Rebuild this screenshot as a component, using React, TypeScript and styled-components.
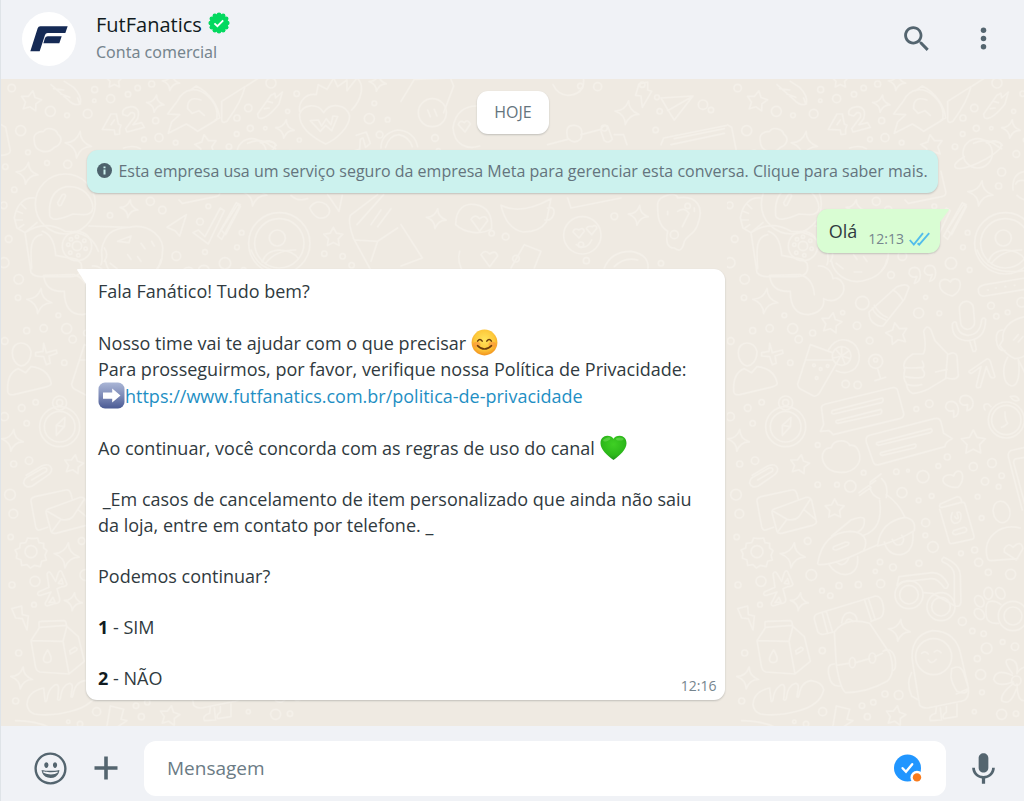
import React from "react";
import styled, { createGlobalStyle } from "styled-components";

const GlobalStyle = createGlobalStyle`
  *, *::before, *::after { box-sizing: border-box; }
  body { margin: 0; }
  body, button, input {
    font-family: "Open Sans", "Noto Sans", sans-serif;
  }
`;

const Page = styled.div`
  display: flex;
  flex-direction: column;
  min-height: 100vh;
  background: #f0f2f6;
  border-left: 1px solid #dfe4e8;
  color: #111b21;
`;

const Header = styled.header`
  display: flex;
  align-items: center;
  min-height: 79px;
  padding: 0 24px 2px 21px;
`;

const Contact = styled.div`
  flex: 1;
  margin-left: 20px;
`;

const Name = styled.h1`
  display: flex;
  align-items: center;
  gap: 6px;
  margin: 0;
  font-size: 20px;
  line-height: 26px;
  font-weight: 400;
`;

const Verified_ = styled.svg`
  flex: none;
  margin-bottom: 4px;
`;

const Subtitle = styled.p`
  margin: 0;
  font-family: "Noto Sans", "Open Sans", sans-serif;
  font-size: 16px;
  line-height: 28px;
  color: #76858e;
`;

const Actions = styled.div`
  display: flex;
  gap: 34px;
`;

const IconButton = styled.button`
  display: flex;
  align-items: center;
  justify-content: center;
  flex: none;
  padding: 0;
  border: 0;
  background: none;
  color: #54656f;
  cursor: pointer;
`;

const Chat = styled.main`
  position: relative;
  flex: 1;
  background: #efeae2;
`;

const Wallpaper = styled.svg`
  position: absolute;
  inset: 0;
  width: 100%;
  height: 100%;
`;

const Thread = styled.div`
  position: relative;
  display: flex;
  flex-direction: column;
  gap: 16px;
  padding: 12px 84px 26px 85px;
`;

const DayPill = styled.div`
  align-self: center;
  padding: 0 17px;
  border-radius: 11px;
  background: #fff;
  box-shadow: 0 1px 2px rgba(11, 20, 26, 0.2);
  font-size: 16px;
  line-height: 43px;
  color: #64747d;
`;

const Notice = styled.button`
  display: flex;
  align-items: center;
  justify-content: center;
  gap: 6px;
  min-height: 43px;
  margin: 0 2px 0 1px;
  padding: 0 0 2px;
  border: 0;
  border-radius: 11px;
  background: #ccf2ee;
  box-shadow: 0 1px 2px rgba(11, 20, 26, 0.2);
  font-size: 16px;
  line-height: 24px;
  color: #64747d;
  cursor: pointer;
`;

const Bubble = styled.article<{ $mine?: boolean }>`
  position: relative;
  align-self: ${(p) => (p.$mine ? "flex-end" : "flex-start")};
  width: ${(p) => (p.$mine ? "auto" : "calc(75% - 2px)")};
  padding: ${(p) => (p.$mine ? "9px 10px 9px 12px" : "9px 8px 9px 12px")};
  border-radius: ${(p) => (p.$mine ? "11px 0 11px 11px" : "0 11px 11px 11px")};
  background: ${(p) => (p.$mine ? "#d9fdd3" : "#fff")};
  box-shadow: 0 1px 2px rgba(11, 20, 26, 0.2);
  font-size: 18px;
  line-height: 26px;
  color: #303a40;
  b { color: #111b21; }
`;

const Tail = styled.svg<{ $mine?: boolean }>`
  position: absolute;
  top: 0;
  ${(p) => (p.$mine ? "right: -9px;" : "left: -9px;")}
`;

const Inline = styled.div`
  display: flex;
  gap: 11px;
`;

const Paragraph = styled.p`
  margin: 0 0 25px;
  white-space: pre-wrap;
  &:last-child { margin-bottom: 0; }
`;

const LastLine = styled.div`
  display: flex;
  justify-content: space-between;
`;

const Stamp = styled.span`
  display: flex;
  align-items: center;
  gap: 5px;
  align-self: flex-end;
  margin-bottom: -7px;
  font-size: 14px;
  line-height: 24px;
  color: #76858e;
`;

const Link = styled.a`
  color: #1f8fc4;
  text-decoration: none;
`;

const EmojiSvg = styled.svg`
  display: inline-block;
  vertical-align: -6px;
`;

const Footer = styled.footer`
  display: flex;
  align-items: center;
  min-height: 75px;
  padding: 14px 24px 5px 32px;
`;

const Composer = styled.div`
  display: flex;
  flex: 1;
  align-items: center;
  height: 55px;
  margin: 0 21px 0 23px;
  padding: 0 24px 0 23px;
  border-radius: 12px;
  background: #fff;
`;

const Field = styled.input`
  flex: 1;
  min-width: 0;
  height: 100%;
  padding: 0;
  border: 0;
  outline: 0;
  background: none;
  font-size: 19px;
  color: #111b21;
  &::placeholder { color: #6b7b85; opacity: 1; }
`;

const AttachWrap = styled.div`
  display: flex;
  margin-left: 23px;
`;

/* ---------- wallpaper ---------- */

const Dots = ({ list }: { list: number[][] }) => (
  <>
    {list.map(([x, y, r], i) => (
      <circle key={i} cx={x} cy={y} r={r} />
    ))}
  </>
);

const Star = ({ x, y, r, a = 0 }: { x: number; y: number; r: number; a?: number }) => {
  const pts = Array.from({ length: 10 }, (_, i) => {
    const t = ((i * 36 - 90 + a) * Math.PI) / 180;
    const q = i % 2 ? r * 0.52 : r;
    return `${(x + q * Math.cos(t)).toFixed(1)},${(y + q * Math.sin(t)).toFixed(1)}`;
  });
  return <polygon points={pts.join(" ")} />;
};

const Sparkle = ({ x, y, r }: { x: number; y: number; r: number }) => {
  const k = r * 0.2;
  return (
    <path
      transform={`rotate(8 ${x} ${y})`}
      d={`M${x} ${y - r}Q${x + k / 2} ${y - k} ${x + r} ${y}Q${x + k} ${y + k / 2} ${x} ${y + r}Q${x - k / 2} ${y + k} ${x - r} ${y}Q${x - k} ${y - k / 2} ${x} ${y - r}z`}
    />
  );
};

const Doodles = () => (
  <g fill="none" stroke="#f4f0e9" strokeWidth="5" strokeLinecap="round" strokeLinejoin="round">
    {/* lower part: envelopes, scooter, luggage, carton, bread */}
    <g transform="translate(-2 361) scale(.3333)">
      <Dots list={[[44,72,9],[90,62,11],[278,15,7],[278,134,8],[336,134,7],[376,139,17],[33,164,16],[43,221,13],[416,98,7],[514,95,8],[549,92,4],[594,110,18],[531,158,15],[581,181,7],[620,168,7],[640,78,7],[667,51,9],[745,80,12],[801,69,13],[780,124,11],[830,107,8],[821,140,7],[758,170,7],[770,234,7],[602,248,12],[601,286,7],[624,321,16],[35,291,8],[248,303,10],[259,405,16],[108,424,15],[39,435,9],[105,494,7],[291,452,7],[316,467,8],[342,437,9],[400,434,9],[465,366,8],[451,394,6],[504,382,10],[467,431,12],[582,370,9],[708,340,7],[749,330,9],[761,367,12],[790,397,9],[857,403,15],[712,544,12],[742,573,8],[776,581,8],[785,625,16],[833,606,7],[870,620,11],[757,656,9],[767,704,15],[59,639,9],[292,632,9],[50,783,9],[293,815,12],[411,797,8],[445,787,8],[480,762,9],[521,765,13],[427,830,9],[771,757,7],[748,815,6],[830,823,15],[873,821,8],[208,845,5],[243,852,8]]} />
      <Star x={224} y={74} r={30} a={10} />
      <Star x={329} y={207} r={30} />
      <Star x={745} y={8} r={38} />
      <Star x={512} y={828} r={31} a={10} />
      <Sparkle x={203} y={346} r={38} />
      <Sparkle x={223} y={485} r={27} />
      <Sparkle x={523} y={571} r={33} />
      <Sparkle x={68} y={714} r={33} />
      <path d="M82 106l46-28q24-10 30 8 0 12-12 20l-46 32q-20 8-26-8 0-14 12-20l46-26q16-2 10 10l-44 26" />
      <path d="M146 262l-24 8q-8 2-12-10l-14-76q-2-10 12-14l92-20q12-2 16 12l4 16M150 206q-12 4-8 16l14 52q4 8 14 6l92-24q14-4 12-12l-14-62q-4-12-16-10zM142 212l44 26q22 6 36-8l34-52M158 276l28-38M272 238l-36-30" />
      <path d="M48 330l14-6 2-14 16-2 6-14 16 2 14-2 4 14 14 2 0 14 10 8-6 14 4 14-14 4-4 16-18-4-12 8-10-10-16 2-2-16-14-6 2-12z" /><circle cx="96" cy="335" r="18" />
      <path d="M144 402q6-14 14 2l12 20 8-26q8-12 12 2l14 32q-2 8-16 8l-14 6 8 30q2 14-12 14l-26 8q-10-4-2-14l14-28-30 10q-14 2-8-10l32-14zM178 430l10-14 4 16zM150 488l12-16 6 14z" />
      <path d="M278 370c10-60 40-94 98-96 40 2 56 24 40 58-40 20-90 40-130 42q-8 0-8-4zM320 288l58-48q36-14 40-2 2 28-20 38M312 374q20 30 50 30 40-4 36-54M334 366q22 20 38-12M326 320l36-14q16 0 6 10l-34 14q-14 0-8-10zM416 286q60-20 48-104M464 176q-34-14-28-50l32-24M402 158l50-36M404 166l34-24M470 116q22 20 14 56M484 164q36 24 56 68M414 334l44-20q10-70 82-82 34 6 28 40-48 30-110 46M478 306q10 40 50 38 40-8 36-66M502 298q8 24 28 14 12-16 0-26" />
      <path d="M644 208l28 96q2 10 12 6l56-12q10-2 6-14l-26-92q-4-8-14-4l-54 14q-12 2-6-10l50-22q14 0 14 18M682 218q-10 22 6 32 22 0 20-24-2-14-12-8l4 16q-8 4-10-4M686 272l32-10q12 4 4 14l-30 8q-14-2-6-12z" />
      <path d="M804 212c4-40 40-34 50-4 8 40-30 54-46 22zM786 350c-12-60 40-100 100-86M786 350q2 12 12 12l80-6M838 326q12-20 26-4 24-24 30 4l-20 34-36-24z" />
      <path d="M850 50l42 160M866 68l34 126M850 50q-2-18 14-20l36-8M866 68q0-12 10-12l24-4" />
      <path d="M654 122c0-16 20-22 32-14 6-20 26-20 27 2 0 14-8 26-14 32-20 2-42-6-45-20z" />
      <circle cx="552" cy="464" r="42" /><circle cx="552" cy="464" r="28" /><circle cx="648" cy="500" r="42" /><circle cx="648" cy="500" r="28" />
      <path d="M522 410l100-12q30 0 48 36-2 14-12 10-20-30-40-28l-86 10-16 10zM594 458l28 2 68 38q18 4 18-14l-2-78q-2-34-50-54-10 8-2 14 34 14 34 40v84" />
      <ellipse cx="763" cy="484" rx="13" ry="18" transform="rotate(-30 763 484)" /><ellipse cx="790" cy="460" rx="13" ry="18" /><ellipse cx="826" cy="460" rx="13" ry="18" transform="rotate(-30 826 460)" /><ellipse cx="763" cy="522" rx="13" ry="18" transform="rotate(-40 763 522)" />
      <circle cx="864" cy="528" r="44" /><circle cx="864" cy="528" r="27" /><path d="M828 494q-20-16-38-8-10 10-6 44 4 22 36 20" />
      <path d="M38 506l30-8 2 26 18 4-4 42-14-34-20-2z" />
      <path d="M268 538q-2-14 14-18l170-52q20 0 24 38 0 26-16 30l-22 8M268 538l10 36q6 12 22 8l26-6M292 520l16 60M304 514l18 60M418 478l22 66M430 474l20 62M350 548q4-32 26-30 20 4 20 26M362 546q6-16 22-2" />
      <path d="M334 674l-6-98c30-40 70-36 106-26l60 90q20 60-8 84-60 34-124 34-16-10-28-84zM334 676l36-6M392 668l42-12M450 650l22-10M328 672q-24 0-16 34 6 36 34 32M474 634q26-14 36 20 6 36-8 38" /><ellipse cx="382" cy="668" rx="9" ry="15" /><ellipse cx="442" cy="654" rx="10" ry="15" />
      <path d="M96 602l26-40 78-6 38 34 18 74-46 38-88-6q-12-4-14-24zM96 602l96 2 18 98M192 604l12-46M120 562v-14q0-4 6-4l70-2q6 2 6 14M146 630q-24 36-2 38 24-2 2-38zM212 632l16-10q10 2 4 10l-18 10z" />
      <path d="M84 794q2-40 50-50l4 36q0 10 6 0 2-30 22-44 16-8 12 20l-2 22q4 6 8-2 4-40 28-46 12 0 6 26l-2 14q4 4 6-4 6-40 36-44 34 4 38 28-10 46-80 64-60 16-110 8-20-8-22-28z" />
      <circle cx="626" cy="650" r="54" />
      <path d="M584 796l-20-122c-12-60 16-94 58-102 50 0 76 30 84 66l24 104q4 40-22 42l-100 20q-16 0-24-8zM590 640q10-10 20 2M628 636q10-10 20 2M610 660q10 16 24-2M560 698q-18 30 0 70l20 12M680 686q26-14 36 12l14 44q-4 26-34 12-16-24-18-44zM694 762l36-16M634 802l-2 18q-24 8-16 22l34-2-4-36M664 800l0 16q-14 10-8 20l40-6v-38" />
      <path d="M862 700q-34-44-6-42 26 6 20 42 20-30 40-10M862 706q-50-22-56 12 10 26 58 8M866 730q-40 30-36 52 26 18 44-34M876 732q2 60 26 48" /><circle cx="874" cy="722" r="14" />
      <path d="M334 798l40 10-8 30 18 4-30 20M334 798l-10 60M50 842q60 0 100 20" />
    </g>
    {/* middle part: clouds, drink, thumb, compass, speech boxes */}
    <g transform="translate(-2 171) scale(.3333)">
      <Dots list={[[15,38,15],[59,88,14],[57,143,8],[178,196,7],[83,242,9],[134,235,11],[203,236,15],[221,268,11],[263,249,9],[353,188,6],[396,227,11],[412,159,20],[434,272,10],[498,75,10],[532,18,13],[678,40,17],[734,60,7],[602,142,6],[581,189,15],[643,190,7],[798,167,10],[814,199,8],[848,187,7],[890,157,14],[452,334,21],[452,330,6],[362,402,11],[398,405,11],[196,338,8],[17,273,10],[110,457,8],[68,474,10],[83,520,8],[16,500,12],[574,477,7],[613,461,11]]} />
      <Star x={319} y={220} r={32} a={10} />
      <Star x={516} y={252} r={34} a={-12} />
      <Sparkle x={121} y={153} r={38} />
      <Sparkle x={40} y={571} r={33} />
      <path d="M134 76c4 40 30 50 62 48 0 50 20 70 54 70 30-4 50-20 46-48 40 20 74-20 56-48-8-14-22-16-28-12-4-30-30-40-44-38M134 76l90-2q40 10 44 60" />
      <path d="M320 34c4 30 30 48 44 54q30 14 66 0c30-10 50-30 56-60M388 66h22M334 40l20 16M416 20l10 14" />
      <path d="M432 186l84-76q30-12 36 2l-14 36-64 80q-14 2-24-6-18-10-18-36zM442 174q8 24 40 36M448 166q14 26 38 36M504 120q18 10 30 32" />
      <path d="M570 52q-18 0-18 18 6 16 24 10l-8 20q18-4 18-26 0-20-16-22zM616 46q-18 0-18 18 6 16 24 10l-8 20q18-4 18-26 0-20-16-22zM680 454q-18 0-18 18 6 16 24 10l-0 20q16-4 14-26-2-20-20-22zM722 436q-18 0-18 18 6 16 24 10l-2 18q20-4 18-26-4-18-22-20z" />
      <path d="M644 104c0-16 20-22 32-8 8-14 30-12 30 8 0 18-16 30-24 34-20-4-38-16-38-34z" />
      <path d="M900 84l-120 20q-20 4-20 16 0 20 20 18l120-20M788 120h2M812 114h2M840 110h2M868 106h2" />
      <path d="M756 0c20 50 60 74 144 62M800 40q30-40 90-40" />
      <rect x="705" y="154" width="42" height="84" rx="21" transform="rotate(-5 726 196)" /><path d="M682 222q-2 50 50 50 50-6 50-64-8-8-12 2-4 44-42 46-30-2-34-38-6-6-12 4zM734 272l10 32q8 2 10-6l-6-28" />
      <path d="M732 364l52-36q8-4 12 6l14 46q-6 8-14 0l-12-30-18 62q-12 4-12-4l14-58-28 20q-8 0-8-6z" />
      <path d="M538 356q-8-24 26-44h30q12-14 2-68 10-24 22-4l12 32 38 40-6 74-50 30q-30 14-50 14-16-8-18-30-12-14-4-44zM538 352q16 4 54 0M542 380q20 6 50 2M548 404q20 6 42 0M592 334q8 14 0 22M592 358q12 12 2 24M632 366l34-8M668 314q22-12 28 4l4 60q-8 14-34 6" />
      <path d="M256 284l66 24M256 284l-38 118q0 12 14 18l34 18q10 2 18-10l62-108M244 330h78" /><circle cx="350" cy="318" r="28" /><path d="M310 300q24-40 60-28c40 14 44 74 10 90q-20 12-46 0M350 318l0-26M350 318l22-16M350 318l26 8M350 318l10 24M350 318l-24 6M350 318l-18-20" /><Dots list={[[267,346,4],[287,357,4],[308,348,4],[275,384,4]]} />
      <path d="M458 356l8 28M450 392l32-10" />
      <path d="M40 308c0-40 50-36 56-4 0 30-16 42-30 44-16-4-26-20-26-40zM26 424c-2-40 10-60 32-68l22 12 16-18c40 4 54 24 60 46 4 10-10 14-20 16l-92 22q-18 2-18-10z" />
      <path d="M134 280l8 28 30-8 2 10-24 8 4 22-12 4-8-24-24-2 0-10 22-4z" />
      <circle cx="182" cy="530" r="60" /><circle cx="182" cy="530" r="46" /><circle cx="182" cy="459" r="21" /><circle cx="182" cy="458" r="9" /><path d="M198 502l-26 24 0 30 24-26zM172 526l24 4" />
      <path d="M296 638c-12-28 6-46 22-44 8-30 52-24 56-8 28-4 38 38 24 58-20 32-86 32-102-6z" />
      <path d="M290 478q-4-12 12-16l196-48q18-4 20 8l18 68q2 12-12 16l-200 48q-4-8-12-12l-26 2 10-20zM322 482l150-38q6 8-2 14l-144 34q-10-2-4-10zM334 512l134-34q6 8-2 14l-128 28q-8-2-4-8z" />
      <path d="M424 576q-4-16 10-20l194-50q16-4 20 10l8 34 26 16q-22 10-22 24l-198 54q-14 4-18-10zM456 578l162-42q8 8-2 12l-154 38q-12-2-6-8zM468 608l102-26q8 6-2 12l-96 22q-10-2-4-8z" />
      <circle cx="844" cy="510" r="54" /><circle cx="844" cy="510" r="44" /><path d="M840 486q0 24 8 34-10 10-18 12M856 440q20-6 26 10-14 8-26-10zM780 480q-10-20 10-18l8 8" />
      <path d="M900 200c-50 10-70 40-66 70l-10 16q20 30 46 40 20-2 30-10M834 240q-22 0-20 30 4 34 26 32M866 270l14-16M880 276l14-16M848 322c-18 30-16 80 12 86 20 0 26-36 20-80M880 330q16 30 20 40" />
    </g>
    {/* upper part: rocket, heart, astronaut, avatar */}
    <g transform="translate(0 -1) scale(.3333)">
      <Dots list={[[32,30,11],[148,100,15],[198,112,7],[59,158,15],[81,223,7],[13,266,8],[138,255,7],[200,259,12],[40,335,8],[8,382,10],[23,483,10],[260,107,13],[281,35,9],[280,68,5],[329,62,12],[381,49,8],[410,30,8],[452,18,9],[464,128,9],[429,184,7],[474,179,12],[524,194,7],[708,120,9],[742,90,11],[748,151,9],[793,151,5],[887,47,8],[810,15,15],[895,186,6],[860,100,6],[1120,76,7],[1105,122,15],[1160,125,7],[1136,170,10],[327,412,8],[448,370,12],[484,396,11],[622,385,7],[597,431,10],[612,522,7],[708,508,7],[722,464,7],[970,527,8],[1025,535,8],[1052,562,8],[707,168,7]]} />
      <Star x={90} y={70} r={32} a={10} />
      <Star x={340} y={6} r={26} />
      <Star x={615} y={204} r={34} a={-10} />
      <Star x={997} y={478} r={30} />
      <Sparkle x={463} y={77} r={26} />
      <Sparkle x={232} y={200} r={40} />
      <Sparkle x={78} y={286} r={33} />
      <Sparkle x={852} y={153} r={28} />
      <Sparkle x={384} y={392} r={27} />
      <Sparkle x={510} y={12} r={26} />
      <Sparkle x={1130} y={14} r={26} />
      <path d="M0 140l14 8 14 70q0 12-28 14" />
      <path d="M100 190c-6-24 14-30 28-30 10-16 40-6 42 8 20 14 6 36-10 40-20 22-60 14-60-18z" />
      <path d="M150 20l50 44q20 22 38 14 6-24-20-50L190 10M158 32l30 4M180 48l26 10M230 60l6 18" />
      <path d="M330 108l-26 46 36 2 2 14 14-2 0-14 4-12-8-4-6-30zM330 140l10-14M366 110q-6-20 24-24 30 2 20 36l-14 18 26-6 8 14-52 14-4-10 26-34q4-16-10-14l-10 10z" />
      <path d="M502 166l10-34 24-22-36-2 30-40c20-40 60-40 86-18 30 26 36 54 30 76l-56 34-14-10-20-12zM566 38l20-14c40 20 66 60 70 96l-14 6M560 92q-2-40 40-26M560 92l14 14 20-8 16 14" />
      <path d="M662 70l70-44q-10 44-54 104-18 10-16-14zM736 24l40-26" />
      <path d="M770 108l40-56 12-6 2 14 20-18-10 36q-40 50-60 42-4-4-4-12zM800 70l14 4M790 92l14-2" />
      <path d="M896 100c-4-30 20-56 50-50l6-30 26 14 20-34 12 26 28-20 0 32 30-38c24 20 14 66-16 96M974 198c-60-30-80-60-78-90 10-30 54-34 72-4 20-34 70-24 78 10 0 34-40 70-72 84zM928 128l24-2 10 18 14-22 14 18 6-26 14 2-18 42-18-16-16 18z" />
      <path d="M1066 172l30-10 12 34-14 12-8-28-8 4-2 30-14 4M1140 210q0-44 50-54 50 4 60 50M1154 208q10-36 40-38 30 6 40 36" />
      <path d="M740 196q40-20 70 8l14 8M780 194q30-14 46 8M368 210q30-10 50 2" />
      <circle cx="193" cy="378" r="90" /><path d="M146 412c-4-50 14-78 50-86 50-4 78 30 80 64-4 26-30 20-60 18-30 14-66 24-70 4zM170 374l14-24q8-4 10 4l-14 28q-8 4-10-8z" />
      <path d="M100 360c-30-4-54 20-60 60l8 30 24 14 36-30M60 378l14 14M48 400l16 6M44 426h20M54 450l14-10M72 464l18 120q10 12 30 12h90q40-4 30-40l-12-12-64-12q-4-60-40-72M72 464q60-40 120-4 80 0 100 60M92 572c-4-60-6-96 30-102" />
      <circle cx="228" cy="504" r="44" /><circle cx="228" cy="504" r="14" /><Dots list={[[228,476,5],[250,488,5],[254,512,5],[232,532,5],[208,524,5],[202,500,5],[210,484,5]]} />
      <path d="M264 444l120 4c60-14 110 30 100 80 0 20-10 40-20 50M300 560c10-20-8-40 10-70 10-30 40-40 70-42M350 490l40-16-6 20zM420 496l12 16M380 530l10 14M452 490l8 14M310 510q14 20 0 40" />
      <path d="M556 410l-20 64-14-16-24-10zM576 464l16-8 20 20 46-86 12 8-48 100zM650 474l56-100 12 6-56 104z" />
      <circle cx="835" cy="496" r="92" /><circle cx="835" cy="496" r="74" /><circle cx="829" cy="480" r="24" /><path d="M784 552q10-34 52-36 40 2 56 26M926 390q20-30 50-10 20 20 0 36-30 16-50-26zM980 350l34 50 10-48M870 352q20 20 50 10" />
      <path d="M1130 350l-82 62q-8 20 10 70l60 110M1068 440l80-90M1062 486l68 4 60-40M1130 490l-20 60M1110 440l30-44M1130 446l40-54" />
    </g>
    {/* top middle: chips, plane, cup, pencil case */}
    <g transform="translate(400 -1) scale(.3333)">
      <Dots list={[[102,180,10],[112,218,6],[538,24,8],[590,26,12],[610,150,9],[724,20,8],[768,58,7],[776,100,8],[764,156,8],[906,80,14],[930,96,8],[640,415,10],[860,384,8],[272,466,8],[314,476,10],[345,542,10],[556,548,9],[820,470,12],[780,556,8],[540,500,8]]} />
      <Sparkle x={678} y={104} r={36} />
      <Sparkle x={106} y={422} r={30} />
      <Sparkle x={712} y={412} r={30} />
      <circle cx="94" cy="104" r="42" /><path d="M80 96l8 20M100 94l8 20M0 70l40-66 108-4 10 24-30 80" />
      <path d="M156 150c6-50 40-66 70-66M156 150c4 50 40 66 80 54M172 140q4-16 18-6 10-12 18 4l-16 24zM456 20q20 40 60 30 40-10 30-60" />
      <path d="M714 18l26-6 0 24 12 4-28 48-4-34-16-2zM780 60l96-6-56 72-18-28zM800 98l70-40" />
      <path d="M500 180q-10-40 20-38 30 2 20 40-20 20-40-2zM600 160q0-20 20-16l14 40q-10 14-24 4zM540 170l60-16M640 170l28 0 10 30M440 200l60-16" />
      <path d="M780 200l8-20 200-40 10 60M820 182l150-30M810 200l160-34" />
      <path d="M164 440c0-50 30-66 60-60 36 6 50 30 48 72-30 20-80 14-108-12zM210 424q12-18 26-2 18-14 24 6l-24 32z" />
      <path d="M300 382q60 30 150-20l-14 70q-20 30-70 30-50-10-66-80zM440 390q24-6 18 20-8 20-26 16M500 360l10 30 150-30" />
      <circle cx="544" cy="472" r="56" /><path d="M516 462q4-14 18-6 12-10 16 4l-16 20zM556 452q4-10 18-6 10-8 14 4l-16 20zM526 500q30 20 46-14" />
      <path d="M770 380c0-30 60-40 60-20 60-10 80 30 60 80-10 30-30 30-40 50q-8 40-30 20-30 0-20-50c-30-20-30-50-30-80zM830 400q20-14 34 6l-20 40M800 400v10M880 390v10" />
      <path d="M0 440l64 100-64 24M176 520q-10 30 14 70l30 4M240 530q12-18 26-2 18-14 24 6l-24 32zM330 570l40-70 50 20-20 50M610 570q20-50 80-50 60 10 50 60M640 566q30-30 70-20" />
    </g>
    {/* planet */}
    <g transform="translate(54 61) scale(.3333)">
      <circle cx="590" cy="40" r="44" /><path d="M550 50q-40 24-24 34 24 8 90-28 60-36 40-48-14-6-40 0M372 180l10 10 100-20q16-4 12-16l-14-60M696 150q-4-50 36-56M704 132q6-14 28-10M498 270l50-76 8 6-44 84z" />
      <Dots list={[[522,20,8],[706,42,10],[662,96,12],[653,138,9]]} />
      <Sparkle x={598} y={160} r={38} />
    </g>
  </g>
);

/* ---------- icons ---------- */

const Logo = () => (
  <svg width="54" height="54" viewBox="67 35 162 162" aria-label="FutFanatics">
    <circle cx="148" cy="116" r="81" fill="#fff" />
    <g fill="#152a55">
      <path d="M122 78H204L197 98H144Q138 98 136 104L120 153H92L114 84Q116 78 122 78z" />
      <path d="M144 108H186L179 129H131L136 113Q138 108 144 108z" />
    </g>
  </svg>
);

const Verified = () => (
  <Verified_ width="22" height="22" viewBox="0 0 22 22" aria-label="Verificado">
    <g fill="#04d95f">
      <circle cx="11" cy="11" r="9" />
      {Array.from({ length: 12 }, (_, i) => {
        const t = (i * Math.PI) / 6;
        return <circle key={i} cx={11 + 8.3 * Math.cos(t)} cy={11 + 8.3 * Math.sin(t)} r="2.3" />;
      })}
    </g>
    <path d="M6.4 11.4l3 2.8 5.8-5.8" fill="none" stroke="#fff" strokeWidth="1.9" />
  </Verified_>
);

const SearchIcon = () => (
  <svg width="33" height="33" viewBox="0 0 24 24" fill="currentColor">
    <path d="M15.9 14.3H15l-.3-.3c1-1.1 1.6-2.7 1.6-4.3 0-3.7-3-6.7-6.7-6.7S3 6 3 9.7s3 6.7 6.7 6.7c1.6 0 3.2-.6 4.3-1.6l.3.3v.8l5.1 5.1 1.5-1.5-5-5.2zm-6.2 0c-2.6 0-4.6-2.1-4.6-4.6s2.1-4.6 4.6-4.6 4.6 2.1 4.6 4.6-2 4.6-4.6 4.6z" />
  </svg>
);

const MenuIcon = () => (
  <svg width="33" height="33" viewBox="0 0 24 24" fill="currentColor">
    <circle cx="12" cy="6" r="2" />
    <circle cx="12" cy="12" r="2" />
    <circle cx="12" cy="18" r="2" />
  </svg>
);

const InfoIcon = () => (
  <svg width="15" height="15" viewBox="0 0 15 15">
    <circle cx="7.5" cy="7.5" r="7.5" fill="#4d626c" />
    <path d="M7.5 6.6v4.8M7.5 3.4v1.9" stroke="#ccf2ee" strokeWidth="2" />
  </svg>
);

const Ticks = () => (
  <svg width="21" height="15" viewBox="0 0 21 15" fill="none" stroke="#53bdeb" strokeWidth="1.9">
    <path d="M.8 8l4 4.6L14 1.2M8.6 11.2l1.6 1.4L20.2 1.2" />
  </svg>
);

const SmileyIcon = () => (
  <svg width="35" height="35" viewBox="0 0 24 24" fill="currentColor">
    <path d="M9.153 11.603c.795 0 1.439-.879 1.439-1.962s-.644-1.962-1.439-1.962-1.439.879-1.439 1.962.644 1.962 1.439 1.962zm-3.204 1.362c-.026-.307-.131 5.218 6.063 5.551 6.066-.25 6.066-5.551 6.066-5.551-6.078 1.416-12.129 0-12.129 0zm11.363 1.108s-.669 1.959-5.051 1.959c-3.505 0-5.388-1.164-5.607-1.959 0 0 5.912 1.055 10.658 0zM11.804 1.011C5.609 1.011.978 6.033.978 12.228s4.826 10.761 11.021 10.761S23.02 18.423 23.02 12.228c.001-6.195-5.021-11.217-11.216-11.217zM12 21.354c-5.273 0-9.381-3.886-9.381-9.159s3.942-9.548 9.215-9.548 9.548 4.275 9.548 9.548c-.001 5.272-4.109 9.159-9.382 9.159zm3.108-9.751c.795 0 1.439-.879 1.439-1.962s-.644-1.962-1.439-1.962-1.439.879-1.439 1.962.644 1.962 1.439 1.962z" />
  </svg>
);

const PlusIcon = () => (
  <svg width="30" height="30" viewBox="0 0 30 30" stroke="currentColor" strokeWidth="3.6">
    <path d="M15 3.5v23M3.5 15h23" />
  </svg>
);

const MicIcon = () => (
  <svg width="33" height="33" viewBox="0 0 24 24" fill="currentColor">
    <path d="M11.999 14.942c2.001 0 3.531-1.53 3.531-3.531V4.35c0-2.001-1.53-3.531-3.531-3.531S8.469 2.35 8.469 4.35v7.061c0 2.001 1.53 3.531 3.53 3.531zm6.238-3.53c0 3.531-2.942 6.002-6.237 6.002s-6.237-2.471-6.237-6.002H3.761c0 4.001 3.178 7.297 7.061 7.885v3.884h2.354v-3.884c3.884-.588 7.061-3.884 7.061-7.885h-2z" />
  </svg>
);

const ExtensionIcon = () => (
  <svg width="28" height="28" viewBox="0 0 28 28">
    <circle cx="13.5" cy="14" r="13.5" fill="#2196ff" />
    <path d="M8.6 14.2l3.4 3.6 6.2-7.6" fill="none" stroke="#fff" strokeWidth="2.4" strokeLinecap="round" />
    <circle cx="23" cy="23.4" r="6.6" fill="#fff" />
    <circle cx="23" cy="23.4" r="4.2" fill="#f97b1c" />
  </svg>
);

const SmileEmoji = () => (
  <EmojiSvg width="27" height="27" viewBox="0 0 27 27" role="img" aria-label="sorriso">
    <defs>
      <radialGradient id="face" cx=".5" cy=".4" r=".6">
        <stop offset="0" stopColor="#ffe45c" />
        <stop offset=".65" stopColor="#fdc83a" />
        <stop offset="1" stopColor="#f2921d" />
      </radialGradient>
    </defs>
    <circle cx="13.5" cy="13.5" r="12.9" fill="url(#face)" />
    <ellipse cx="5.8" cy="15.6" rx="3.6" ry="2.8" fill="#fb8a3c" opacity=".55" />
    <ellipse cx="21.2" cy="15.6" rx="3.6" ry="2.8" fill="#fb8a3c" opacity=".55" />
    <g fill="none" stroke="#6b3d0c" strokeWidth="1.5" strokeLinecap="round">
      <path d="M6.6 12.2q2.2-3.600 4.6 0M15.8 12.2q2.400-3.600 4.6 0M6.500 16.600q7 7 14 0" />
    </g>
  </EmojiSvg>
);

const ArrowEmoji = () => (
  <EmojiSvg width="27" height="27" viewBox="0 0 27 27" role="img" aria-label="seta para a direita">
    <defs>
      <linearGradient id="key" x1="0" y1="0" x2="0" y2="1">
        <stop offset="0" stopColor="#aab6d6" />
        <stop offset=".5" stopColor="#7f8cb8" />
        <stop offset="1" stopColor="#4a5a94" />
      </linearGradient>
    </defs>
    <rect x=".5" y=".5" width="26" height="26" rx="6.5" fill="url(#key)" />
    <path d="M5 10.4h9.2V6.6l8.3 7-8.3 7v-3.9H5z" fill="#fff" />
  </EmojiSvg>
);

const HeartEmoji = () => (
  <EmojiSvg width="27" height="27" viewBox="0 0 27 27" role="img" aria-label="coração verde">
    <defs>
      <radialGradient id="heart" cx=".5" cy=".35" r=".65">
        <stop offset="0" stopColor="#3fd024" />
        <stop offset=".7" stopColor="#2cb81a" />
        <stop offset="1" stopColor="#1f8f1c" />
      </radialGradient>
    </defs>
    <path d="M13.5 26C7 21 .5 15.5.5 9.2.5 4.6 3.6 1.8 7.2 1.8c3 0 5.2 1.2 6.3 3 1.1-1.8 3.3-3 6.3-3 3.6 0 6.7 2.8 6.7 7.400C26.5 15.5 20 21 13.5 26z" fill="url(#heart)" />
    <ellipse cx="6.8" cy="5.4" rx="3.8" ry="1.6" fill="#8be874" opacity=".4" transform="rotate(-20 6.8 5.4)" />
    <ellipse cx="19.8" cy="5" rx="3.8" ry="1.6" fill="#8be874" opacity=".4" />
  </EmojiSvg>
);

export default function App() {
  return (
    <Page>
      <GlobalStyle />
      <Header>
        <Logo />
        <Contact>
          <Name>
            FutFanatics
            <Verified />
          </Name>
          <Subtitle>Conta comercial</Subtitle>
        </Contact>
        <Actions>
          <IconButton aria-label="Pesquisar"><SearchIcon /></IconButton>
          <IconButton aria-label="Menu"><MenuIcon /></IconButton>
        </Actions>
      </Header>

      <Chat>
        <Wallpaper aria-hidden="true">
          <defs>
            <pattern id="doodles" width="726" height="800" patternUnits="userSpaceOnUse">
              <Doodles />
            </pattern>
          </defs>
          <rect width="100%" height="100%" fill="url(#doodles)" />
        </Wallpaper>
        <Thread>
          <DayPill>HOJE</DayPill>
          <Notice>
            <InfoIcon />
            Esta empresa usa um serviço seguro da empresa Meta para gerenciar esta conversa. Clique para saber mais.
          </Notice>
          <Bubble $mine>
            <Tail $mine width="9" height="14" viewBox="0 0 9 14">
              <path d="M0 0H8Q9.5 0 8.6 1.5L0 13z" fill="#d9fdd3" />
            </Tail>
            <Inline>
              <span>Olá</span>
              <Stamp>12:13 <Ticks /></Stamp>
            </Inline>
          </Bubble>
          <Bubble>
            <Tail width="9" height="16" viewBox="0 0 9 16">
              <path d="M9 0H1Q-.5 0 .4 1.5L9 15z" fill="#fff" />
            </Tail>
            <Paragraph>Fala Fanático! Tudo bem?</Paragraph>
            <Paragraph>
              Nosso time vai te ajudar com o que precisar <SmileEmoji />
              <br />
              Para prosseguirmos, por favor, verifique nossa Política de Privacidade:
              <br />
              <ArrowEmoji />
              <Link href="https://www.futfanatics.com.br/politica-de-privacidade">
                https://www.futfanatics.com.br/politica-de-privacidade
              </Link>
            </Paragraph>
            <Paragraph>
              Ao continuar, você concorda com as regras de uso do canal <HeartEmoji />
            </Paragraph>
            <Paragraph>
              {" _Em casos de cancelamento de item personalizado que ainda não saiu"}
              <br />
              da loja, entre em contato por telefone. _
            </Paragraph>
            <Paragraph>Podemos continuar?</Paragraph>
            <Paragraph><b>1</b> - SIM</Paragraph>
            <LastLine>
              <span><b>2</b> - NÃO</span>
              <Stamp>12:16</Stamp>
            </LastLine>
          </Bubble>
        </Thread>
      </Chat>

      <Footer>
        <IconButton aria-label="Emojis"><SmileyIcon /></IconButton>
        <AttachWrap>
          <IconButton aria-label="Anexar"><PlusIcon /></IconButton>
        </AttachWrap>
        <Composer>
          <Field type="text" aria-label="Mensagem" placeholder="Mensagem" />
          <IconButton aria-label="Extensão"><ExtensionIcon /></IconButton>
        </Composer>
        <IconButton aria-label="Gravar áudio"><MicIcon /></IconButton>
      </Footer>
    </Page>
  );
}
